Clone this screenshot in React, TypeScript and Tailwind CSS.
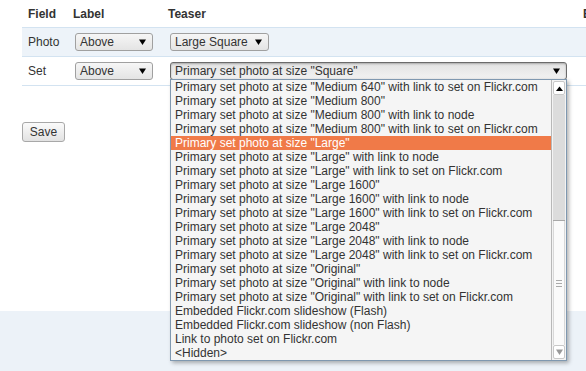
import React from "react";

const Arrow = ({ color = "#000" }: { color?: string }) => (
  <svg width="7" height="6" viewBox="0 0 7 6" className="shrink-0">
    <path d="M0 0.5 H7 L3.5 6 Z" fill={color} />
  </svg>
);

const UpArrow = ({ color = "#000" }: { color?: string }) => (
  <svg width="7" height="5" viewBox="0 0 7 5">
    <path d="M0 5 H7 L3.5 0.5 Z" fill={color} />
  </svg>
);

function Select({ label, w, focused }: { label: string; w: string; focused?: boolean }) {
  return (
    <div
      className={`${w} h-[18px] ml-[2px] flex items-center justify-between pl-[4px] pr-[6px] rounded-[3px] border text-[12px] leading-[14px] text-[#333] ${
        focused
          ? "border-[#6b6b6b] bg-gradient-to-b from-[#e2e2e2] to-[#f2f2f2] shadow-[inset_0_1px_2px_rgba(0,0,0,0.25)]"
          : "border-[#a0a0a0] bg-gradient-to-b from-[#f6f6f6] to-[#e4e4e4]"
      }`}
    >
      <span className="whitespace-nowrap">{label}</span>
      <Arrow />
    </div>
  );
}

const items = [
  'Primary set photo at size "Medium 640" with link to set on Flickr.com',
  'Primary set photo at size "Medium 800"',
  'Primary set photo at size "Medium 800" with link to node',
  'Primary set photo at size "Medium 800" with link to set on Flickr.com',
  'Primary set photo at size "Large"',
  'Primary set photo at size "Large" with link to node',
  'Primary set photo at size "Large" with link to set on Flickr.com',
  'Primary set photo at size "Large 1600"',
  'Primary set photo at size "Large 1600" with link to node',
  'Primary set photo at size "Large 1600" with link to set on Flickr.com',
  'Primary set photo at size "Large 2048"',
  'Primary set photo at size "Large 2048" with link to node',
  'Primary set photo at size "Large 2048" with link to set on Flickr.com',
  'Primary set photo at size "Original"',
  'Primary set photo at size "Original" with link to node',
  'Primary set photo at size "Original" with link to set on Flickr.com',
  "Embedded Flickr.com slideshow (Flash)",
  "Embedded Flickr.com slideshow (non Flash)",
  "Link to photo set on Flickr.com",
  "<Hidden>",
];

export default function App() {
  return (
    <div className="relative w-[586px] h-[371px] overflow-hidden bg-white font-['Liberation_Sans',Arial,sans-serif] text-[12px] text-[#333] flex flex-col">
      <div className="pl-[22px]">
        {/* header */}
        <div className="flex h-[28px] items-center border-b border-[#d3e3f1] font-bold text-[#333] whitespace-nowrap overflow-hidden">
          <div className="w-[45px] shrink-0 pl-[6px]">Field</div>
          <div className="w-[95px] shrink-0 pl-[6px]">Label</div>
          <div className="w-[415px] shrink-0 pl-[6px]">Teaser</div>
          <div className="shrink-0 pl-[6px]">E</div>
        </div>
        {/* row 1 */}
        <div className="flex h-[29px] items-center border-b border-[#d3e3f1] bg-[#edf3f9]">
          <div className="w-[45px] shrink-0 pl-[6px]">Photo</div>
          <div className="w-[95px] shrink-0 pl-[6px]">
            <Select label="Above" w="w-[78px]" />
          </div>
          <div className="shrink-0 pl-[6px]">
            <Select label="Large Square" w="w-[99px]" />
          </div>
        </div>
        {/* row 2 */}
        <div className="flex h-[29px] items-center border-b border-[#d3e3f1]">
          <div className="w-[45px] shrink-0 pl-[6px]">Set</div>
          <div className="w-[95px] shrink-0 pl-[6px]">
            <Select label="Above" w="w-[78px]" />
          </div>
          <div className="shrink-0 pl-[6px]">
            <Select label='Primary set photo at size "Square"' w="w-[397px]" focused />
          </div>
        </div>
        <div className="pt-[36px]">
          <button className="h-[20px] w-[43px] rounded-[3px] border border-[#a8a8a8] bg-gradient-to-b from-[#fbfbfb] to-[#e2e2e2] text-[12px] leading-[14px] text-[#333] font-['Liberation_Sans',Arial,sans-serif]">
            Save
          </button>
        </div>
      </div>
      <div className="mt-auto h-[60px] bg-[#ecf2f8]" />

      {/* open dropdown list */}
      <div className="absolute left-[170px] top-[79px] w-[397px] h-[282px] border border-[#7f98b0] bg-[#f5f5f5] shadow-[2px_2px_4px_rgba(0,0,0,0.3)] flex">
        <div className="flex-1 flex flex-col">
          {items.map((t, i) => (
            <div
              key={i}
              className={`h-[14px] leading-[14px] pl-[4px] whitespace-nowrap text-[12px] ${
                i === 4 ? "bg-[#f07a48] text-white" : "text-[#333]"
              }`}
            >
              {t}
            </div>
          ))}
        </div>
        <div className="w-[15px] flex flex-col border-l border-[#b8b8b8] bg-[#f3f3f3]">
          <div className="h-[14px] mx-[1px] mt-[1px] flex items-center justify-center rounded-[2px] border border-[#c8c8c8] bg-white">
            <UpArrow />
          </div>
          <div className="h-[126px] mx-[1px] bg-[#dcdcdc] border-b border-[#a8a8a8]" />
          <div className="h-[124px] mx-[1px] bg-[#fafafa] border-x border-[#d8d8d8] flex items-center justify-center">
            <div className="flex flex-col gap-[2px]">
              <div className="w-[6px] h-px bg-[#aaa]" />
              <div className="w-[6px] h-px bg-[#aaa]" />
              <div className="w-[6px] h-px bg-[#aaa]" />
            </div>
          </div>
          <div className="h-[14px] mx-[1px] flex items-center justify-center rounded-[2px] border border-[#c8c8c8] bg-white">
            <Arrow color="#999" />
          </div>
        </div>
      </div>
    </div>
  );
}
